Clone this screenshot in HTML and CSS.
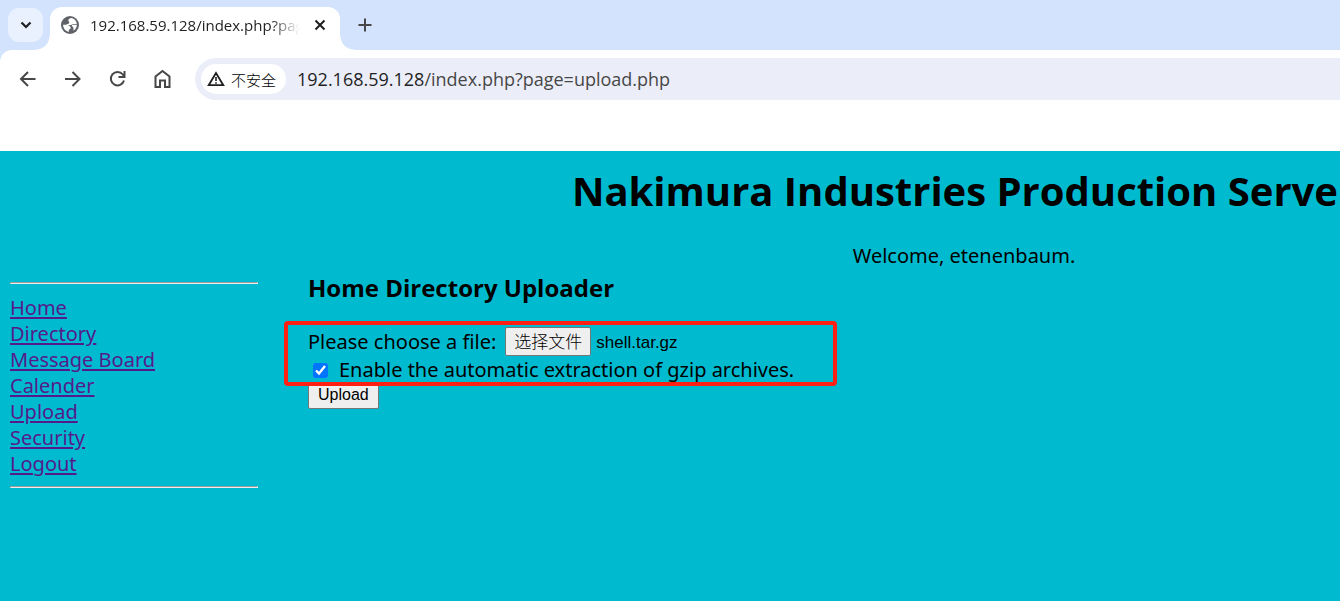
FILE: index.html
```html
<!DOCTYPE html>
<html lang="en">
<head>
<meta charset="utf-8">
<title>Nakimura Industries Production Server</title>
<link rel="stylesheet" href="styles.css">
</head>
<body>
<header class="browser">
  <div class="tabstrip">
    <button class="tab-search" type="button" aria-label="Search tabs">
      <svg width="12" height="8" viewBox="0 0 12 8"><path d="M1.500 1.500 6 6l4.500-4.500" fill="none" stroke="#1f1f1f" stroke-width="2.200"/></svg>
    </button>
    <div class="tab">
      <svg class="globe" width="18" height="18" viewBox="0 0 18 18"><circle cx="9" cy="9" r="9" fill="#5f6368"/><path d="M10.500 2c-1.600.2-3 1-3.200 2.300-.1 1 1.200 1.300 1 2.400C8 8 5.800 7.800 5.300 8.700H2.100C2 12.300 4.600 15.300 7.800 15.900v-1.800c0-1.100 1.900-.8 1.900-2.400 0-1.200-1-1.500-2.600-1.600 0-1.500 3.700-.5 4.500-2.200h4.200C15.600 5 13.400 2.600 10.500 2Z" fill="#fff"/><path d="M11 8.800h4.900c0 2.500-1.300 4.500-3.200 5.800-.8-.8.500-2.600-.6-3.400-.7-.5-1.400-1.100-1.100-2.400Z" fill="#fff"/></svg>
      <span class="tab-title">192.168.59.128/index.php?page=upload.php</span>
      <button class="tab-close" type="button" aria-label="Close tab">
        <svg width="12" height="12" viewBox="0 0 12 12"><path d="m1.500 1.500 9 9m0-9-9 9" stroke="#1f1f1f" stroke-width="2"/></svg>
      </button>
    </div>
    <button class="new-tab" type="button" aria-label="New tab">
      <svg width="14" height="14" viewBox="0 0 14 14"><path d="M7 .5v13M.5 7h13" stroke="#474747" stroke-width="2"/></svg>
    </button>
  </div>
  <div class="toolbar">
    <button class="nav" type="button" aria-label="Back"><svg width="18" height="18" viewBox="0 0 18 18"><path d="M16.500 9H3M9 2 2 9l7 7" fill="none" stroke="#474747" stroke-width="2"/></svg></button>
    <button class="nav" type="button" aria-label="Forward"><svg width="18" height="18" viewBox="0 0 18 18"><path d="M1 9h13.500M8.500 2l7 7-7 7" fill="none" stroke="#474747" stroke-width="2"/></svg></button>
    <button class="nav" type="button" aria-label="Reload"><svg width="18" height="18" viewBox="0 0 18 18"><path d="M15 10.500A6.700 6.700 0 1 1 13.800 4.500L15.500 6.300M15.500 1v6h-6" fill="none" stroke="#474747" stroke-width="2"/></svg></button>
    <button class="nav" type="button" aria-label="Home"><svg width="18" height="20" viewBox="0 0 18 20"><path d="M1.500 18V7.500l7-5.500 7 5.500V18H11v-6.500H6V18Z" fill="none" stroke="#474747" stroke-width="2"/></svg></button>
    <div class="omnibox">
      <button class="security" type="button">
        <svg width="18" height="16" viewBox="0 0 18 16"><path d="M9 2 1.700 14.200h14.600Z" fill="none" stroke="#1f1f1f" stroke-width="1.800"/><path d="M9 6v4m0 1.200v1.600" stroke="#1f1f1f" stroke-width="1.600"/></svg>
        <span>不安全</span>
      </button>
      <span class="url">192.168.59.128<span class="url-path">/index.php?page=upload.php</span></span>
    </div>
  </div>
</header>
<main class="page">
  <div class="banner">
    <h1 class="title">Nakimura Industries Production Server</h1>
    <p class="welcome">Welcome, etenenbaum.</p>
  </div>
  <div class="columns">
    <nav class="menu">
      <hr class="rule">
      <a href="#home">Home</a>
      <a href="#directory">Directory</a>
      <a href="#board">Message Board</a>
      <a href="#calender">Calender</a>
      <a href="#upload">Upload</a>
      <a href="#security">Security</a>
      <a href="#logout">Logout</a>
      <hr class="rule">
    </nav>
    <form class="uploader">
      <h2 class="subtitle">Home Directory Uploader</h2>
      <div class="fields">
        <div class="file-row">
          <label for="choose">Please choose a file:</label>
          <button class="control choose" id="choose" type="button">选择文件</button>
          <span class="file-name">shell.tar.gz</span>
        </div>
        <div class="check-row">
          <input class="check" type="checkbox" id="extract" checked>
          <label for="extract">Enable the automatic extraction of gzip archives.</label>
        </div>
      </div>
      <button class="control upload" type="button">Upload</button>
    </form>
  </div>
</main>
</body>
</html>
```
FILE: styles.css
```css
* { box-sizing: border-box; }

body {
  margin: 0;
  min-height: 100vh;
  display: flex;
  flex-direction: column;
  overflow: hidden;
  background: #fff;
  color: #000;
  font-family: "Open Sans", "Noto Sans CJK SC", sans-serif;
}

button {
  display: flex;
  align-items: center;
  justify-content: center;
  padding: 0;
  border: 0;
  background: none;
  font-family: inherit;
}

svg { display: block; flex: none; }

.browser { background: #d3e3fd; }

.tabstrip {
  display: flex;
  align-items: center;
  height: 50px;
  padding-left: 8px;
}

.tab-search {
  width: 35px;
  height: 34px;
  border-radius: 11px;
  background: #e9f1fe;
}

.tab {
  position: relative;
  display: flex;
  align-items: center;
  align-self: flex-end;
  width: 290px;
  height: 43px;
  margin-left: 7px;
  padding: 0 14px 7px 11px;
  border-radius: 12px 12px 0 0;
  background: #fff;
}

.tab::before,
.tab::after {
  content: "";
  position: absolute;
  bottom: 0;
  width: 14px;
  height: 14px;
}

.tab::before {
  right: 100%;
  background: radial-gradient(circle at 0 0, transparent 13px, #fff 14px);
}

.tab::after {
  left: 100%;
  background: radial-gradient(circle at 100% 0, transparent 13px, #fff 14px);
}

.tab-title {
  flex: 1;
  min-width: 0;
  margin: 0 15px 0 11px;
  overflow: hidden;
  white-space: nowrap;
  font-size: 15px;
  color: #1f1f1f;
  -webkit-mask-image: linear-gradient(to left, transparent, #000 28px);
  mask-image: linear-gradient(to left, transparent, #000 28px);
}

.new-tab { margin-left: 18px; }

.toolbar {
  display: flex;
  align-items: center;
  height: 101px;
  padding: 0 0 43px 18px;
  border-radius: 12px 0 0 0;
  background: #fff;
}

.nav {
  width: 20px;
  height: 20px;
  margin-right: 25px;
}

.omnibox {
  flex: 1;
  display: flex;
  align-items: center;
  height: 42px;
  margin-left: -3px;
  padding-left: 6px;
  border-radius: 21px 0 0 21px;
  background: #ebeef8;
}

.security {
  gap: 6px;
  height: 30px;
  padding: 0 10px 0 6px;
  border-radius: 15px;
  background: #fff;
  color: #000;
  font-size: 15px;
  font-weight: 300;
}

.url {
  margin-left: 11px;
  font-size: 18px;
  color: #1f1f1f;
}

.url-path { color: #474747; }

.page {
  flex: 1;
  min-width: 1928px;
  padding: 0 10px;
  background: #00bbd0;
  font-family: "Noto Sans", sans-serif;
  font-size: 20px;
  line-height: 26px;
}

.banner {
  padding-top: 12px;
  text-align: center;
}

.title {
  margin: 0;
  font-family: "Open Sans", sans-serif;
  font-size: 40px;
  line-height: 56px;
}

.welcome { margin: 24px 0 0; }

.columns {
  display: flex;
  align-items: flex-start;
  gap: 50px;
}

.menu {
  display: flex;
  flex-direction: column;
  align-items: flex-start;
  width: 248px;
  margin-top: 13px;
}

.rule {
  width: 100%;
  margin: 0;
  border: 1px inset #eee;
}

.rule:first-child { margin-bottom: 11px; }
.rule:last-child { margin-top: 9px; }

.menu a { color: #551a8b; text-underline-offset: 2px; }

.subtitle {
  margin: 6px 0 20px;
  font-family: "Open Sans", sans-serif;
  font-size: 24px;
  line-height: 26px;
}

.fields { position: relative; }

.fields::after {
  content: "";
  position: absolute;
  inset: 0 -43px -2px -24px;
  border: 4px solid #ff2013;
  border-radius: 4px;
  pointer-events: none;
}

.file-row { display: flex; align-items: center; padding-top: 6px; }

.control {
  border: 1px solid #767676;
  border-radius: 2px;
  background: #efefef;
  color: #000;
  font-family: "Liberation Sans", "Noto Sans CJK SC", sans-serif;
  font-size: 17px;
  line-height: 20px;
}

.choose { height: 29px; margin: 0 5px 0 9px; padding: 2px 8px 0; font-weight: 300; }

.file-name { padding-top: 2px; font-family: "Liberation Sans", sans-serif; font-size: 17px; }

.check-row { display: flex; align-items: center; height: 28px; }

.check { width: 15px; height: 15px; margin: 0 11px 0 5px; accent-color: #0075ff; }

.upload { height: 25px; padding: 0 9px 4px; font-size: 16px; }
```
